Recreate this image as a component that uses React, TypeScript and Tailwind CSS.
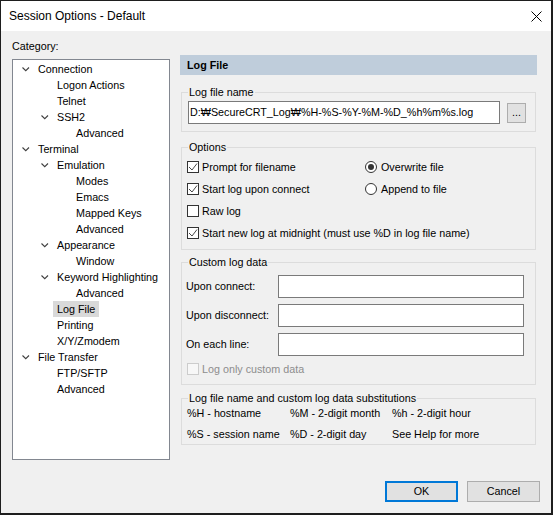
import React from "react";

type Node = { label: string; level: number; open?: boolean; selected?: boolean };

const tree: Node[] = [
  { label: "Connection", level: 0, open: true },
  { label: "Logon Actions", level: 1 },
  { label: "Telnet", level: 1 },
  { label: "SSH2", level: 1, open: true },
  { label: "Advanced", level: 2 },
  { label: "Terminal", level: 0, open: true },
  { label: "Emulation", level: 1, open: true },
  { label: "Modes", level: 2 },
  { label: "Emacs", level: 2 },
  { label: "Mapped Keys", level: 2 },
  { label: "Advanced", level: 2 },
  { label: "Appearance", level: 1, open: true },
  { label: "Window", level: 2 },
  { label: "Keyword Highlighting", level: 1, open: true },
  { label: "Advanced", level: 2 },
  { label: "Log File", level: 1, selected: true },
  { label: "Printing", level: 1 },
  { label: "X/Y/Zmodem", level: 1 },
  { label: "File Transfer", level: 0, open: true },
  { label: "FTP/SFTP", level: 1 },
  { label: "Advanced", level: 1 },
];

const indent = ["pl-[9px]", "pl-[28px]", "pl-[47px]"];

function Chevron() {
  return (
    <svg width="8" height="8" viewBox="0 0 8 8" className="block">
      <path d="M0.5 2.5 L3.75 5.75 L7 2.5" fill="none" stroke="#404040" strokeWidth="1.1" />
    </svg>
  );
}

function Check({ checked, disabled, label }: { checked?: boolean; disabled?: boolean; label: string }) {
  return (
    <label className="flex items-center gap-[3px]">
      <span
        className={
          "flex h-[12px] w-[12px] items-center justify-center border " +
          (disabled ? "border-[#cccccc] bg-[#f7f7f7]" : "border-[#333333] bg-white")
        }
      >
        {checked && (
          <svg width="10" height="10" viewBox="0 0 10 10" className="block">
            <path d="M1 5 L4 8 L9 1.5" fill="none" stroke="#333333" strokeWidth="0.9" />
          </svg>
        )}
      </span>
      <span className={disabled ? "text-[#8d8d8d]" : ""}>{label}</span>
    </label>
  );
}

function Radio({ checked, label }: { checked?: boolean; label: string }) {
  return (
    <label className="flex items-center gap-[4px]">
      <span className="flex h-[12px] w-[12px] items-center justify-center rounded-full border border-[#333333] bg-white">
        {checked && <span className="h-[6px] w-[6px] rounded-full bg-[#333333]" />}
      </span>
      <span>{label}</span>
    </label>
  );
}

function Group({ title, className, children }: { title: string; className: string; children: React.ReactNode }) {
  return (
    <fieldset className={"mx-px border border-[#dcdcdc] px-[6px] " + className}>
      <legend className="px-px leading-[15px]">{title}</legend>
      {children}
    </fieldset>
  );
}

function TextBox({ className, value }: { className: string; value?: string }) {
  return (
    <div className={"flex items-center border border-[#7a7a7a] bg-white px-px " + className}>
      {value}
    </div>
  );
}

export default function App() {
  return (
    <div className="h-[515px] w-[553px] bg-[#1e1e1e] pl-px pt-px font-['Liberation_Sans',Arial,sans-serif] text-[10.75px] text-black">
      <div className="flex h-[512px] w-[550px] flex-col bg-[#f0f0f0]">
        {/* title bar */}
        <div className="flex h-[30px] items-center justify-between bg-white pl-[8px] pr-[9px] text-[12px]">
          <span>Session Options - Default</span>
          <svg width="11" height="11" viewBox="0 0 11 11" className="block">
            <path d="M0.5 0.5 L10.5 10.5 M10.5 0.5 L0.5 10.5" stroke="#000" strokeWidth="1" />
          </svg>
        </div>

        <div className="flex flex-col pl-[11px] pt-[8px]">
          <div className="flex items-start gap-[10px]">
            {/* category tree */}
            <div className="flex flex-col">
              <div className="leading-[15px]">Category:</div>
              <div className="mt-[5px] h-[401px] w-[158px] border border-[#828790] bg-white pt-px">
                {tree.map((n, i) => (
                  <div key={i} className={"flex h-[16px] items-center " + indent[n.level]}>
                    <span className="flex w-[16px] items-center">{n.open && <Chevron />}</span>
                    <span className={"-ml-[4px] flex h-[16px] items-center px-[4px] " + (n.selected ? "bg-[#d9d9d9]" : "")}>
                      {n.label}
                    </span>
                  </div>
                ))}
              </div>
            </div>

            {/* log file page */}
            <div className="mt-[16px] flex w-[357px] flex-col">
              <div className="h-[20px] bg-[#bfcddb] pl-[7px] font-bold leading-[20px]">Log File</div>

              <Group title="Log file name" className="mt-[10px] pb-[7px] pt-px">
                <div className="flex items-center gap-[7px]">
                  <TextBox className="h-[23px] w-[312px]" value="D:₩SecureCRT_Log₩%H-%S-%Y-%M-%D_%h%m%s.log" />
                  <div className="flex h-[20px] w-[19px] items-end justify-center border border-[#adadad] bg-[#e1e1e1] pb-[4px] leading-none">
                    ...
                  </div>
                </div>
              </Group>

              <Group title="Options" className="mt-[8px] pb-[5px] pt-px">
                <div className="-ml-px flex flex-col">
                  <div className="grid h-[22px] grid-cols-[178px_auto] items-center">
                    <Check checked label="Prompt for filename" />
                    <Radio checked label="Overwrite file" />
                  </div>
                  <div className="grid h-[22px] grid-cols-[178px_auto] items-center">
                    <Check checked label="Start log upon connect" />
                    <Radio label="Append to file" />
                  </div>
                  <div className="flex h-[22px] items-center">
                    <Check label="Raw log" />
                  </div>
                  <div className="flex h-[22px] items-center">
                    <Check checked label="Start new log at midnight (must use %D in log file name)" />
                  </div>
                </div>
              </Group>

              <Group title="Custom log data" className="mt-[5px] pb-[4px] pt-[5px]">
                <div className="-ml-[2px] flex flex-col gap-[6px]">
                  {["Upon connect:", "Upon disconnect:", "On each line:"].map((t) => (
                    <div key={t} className="flex items-center">
                      <span className="w-[92px]">{t}</span>
                      <TextBox className="h-[23px] w-[246px]" />
                    </div>
                  ))}
                </div>
                <div className="-ml-px mt-[2px] flex h-[22px] items-center">
                  <Check disabled label="Log only custom data" />
                </div>
              </Group>

              <Group title="Log file name and custom log data substitutions" className="mt-[6px] pb-[3px]">
                <div className="-ml-px grid grid-cols-[103px_102px_auto] gap-y-[7px] leading-[14px]">
                  <span>%H - hostname</span>
                  <span>%M - 2-digit month</span>
                  <span>%h - 2-digit hour</span>
                  <span>%S - session name</span>
                  <span>%D - 2-digit day</span>
                  <span>See Help for more</span>
                </div>
              </Group>
            </div>
          </div>

          <div className="mt-[21px] flex justify-end gap-[9px] pr-[11px]">
            <button className="flex h-[21px] w-[73px] items-center justify-center border-2 border-[#0078d7] bg-[#e1e1e1]">
              OK
            </button>
            <button className="flex h-[21px] w-[73px] items-center justify-center border border-[#adadad] bg-[#e1e1e1]">
              Cancel
            </button>
          </div>
        </div>
      </div>
    </div>
  );
}
